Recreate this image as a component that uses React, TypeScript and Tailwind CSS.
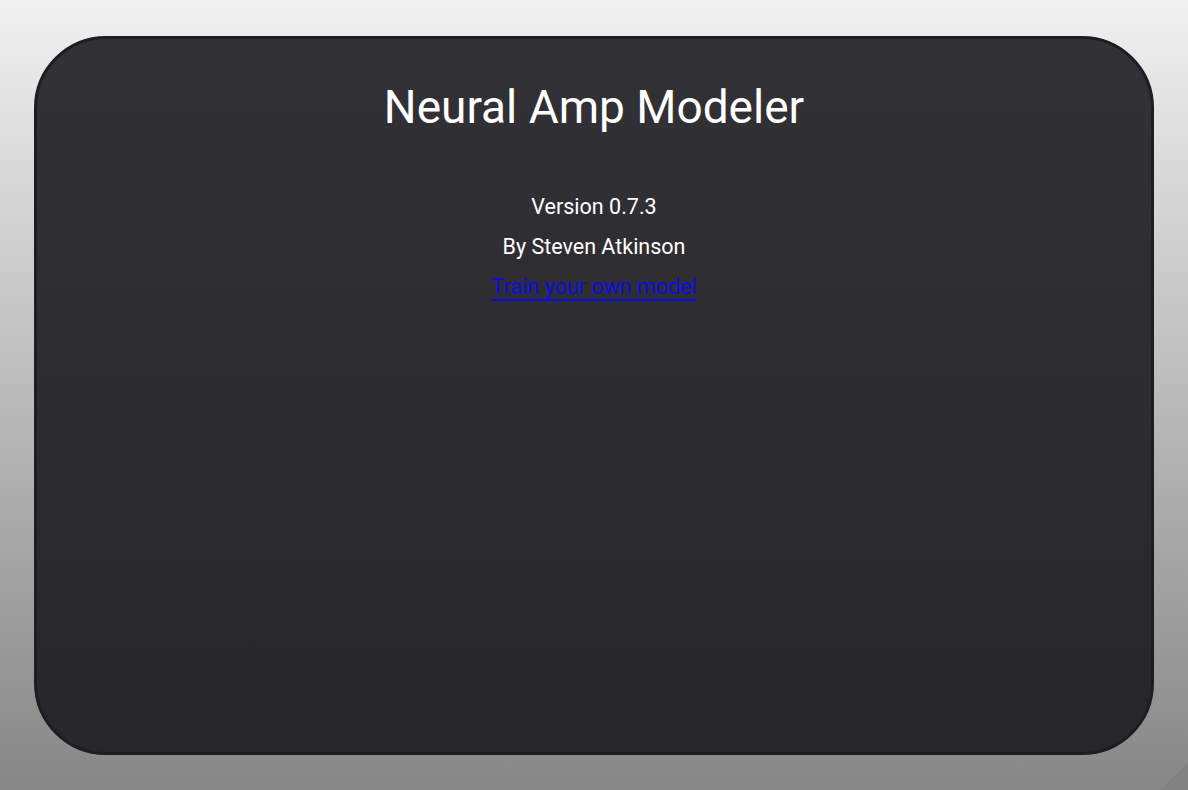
export default function App() {
  return (
    <div className="relative h-[790px] w-[1188px] overflow-hidden bg-gradient-to-b from-[#f1f1f1] to-[#878787] px-[34px] pt-[36px] pb-[35px] font-['Roboto',sans-serif]">
      <div className="flex h-full flex-col items-center rounded-[72px] border-[3px] border-[#1e1d21] bg-gradient-to-b from-[#323136] to-[#27262b]">
        <h1 className="mt-[41px] text-[46px] leading-[54px] font-normal text-white">Neural Amp Modeler</h1>
        <div className="mt-[58px] flex flex-col items-center gap-[10px] text-[21.5px] leading-[30px] text-white">
          <p>Version 0.7.3</p>
          <p>By Steven Atkinson</p>
          <a href="#" className="text-[#0b0be6] underline decoration-2 underline-offset-[5px]">
            Train your own model
          </a>
        </div>
      </div>
      {/* resize grip */}
      <div className="absolute right-0 bottom-0 h-[27px] w-[27px] bg-gradient-to-br from-transparent from-50% to-[#828282] to-50%" />
    </div>
  );
}
